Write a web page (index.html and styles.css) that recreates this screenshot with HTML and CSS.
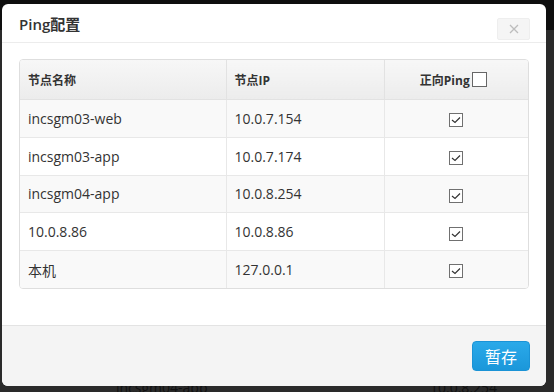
FILE: index.html
```html
<!DOCTYPE html>
<html>
<head>
<meta charset="utf-8">
<link rel="stylesheet" href="styles.css">
</head>
<body>
<div class="backdrop-text"><span class="bt1">incsgm04-app</span><span class="bt2">10.0.8.254</span></div>
<div class="modal">
  <div class="modal-header">
    <h3 class="modal-title">Ping配置</h3>
    <button class="close-btn" type="button">
      <svg width="10" height="10" viewBox="0 0 10 10"><path d="M1 1L9 9M9 1L1 9" stroke="#bdbdbd" stroke-width="1.3" fill="none"/></svg>
    </button>
  </div>
  <div class="modal-body">
    <div class="table-wrap">
      <table class="ping-table">
        <colgroup><col class="c1"><col class="c2"><col class="c3"></colgroup>
        <thead>
          <tr>
            <th>节点名称</th>
            <th>节点IP</th>
            <th class="center"><span class="th-ping">正向Ping<span class="cb cb-empty"></span></span></th>
          </tr>
        </thead>
        <tbody>
          <tr><td>incsgm03-web</td><td>10.0.7.154</td><td class="center"><span class="cb"><svg width="10" height="8" viewBox="0 0 10 8"><path d="M1 4L4 6.5L9 1.5" stroke="#333" stroke-width="1.2" fill="none"/></svg></span></td></tr>
          <tr><td>incsgm03-app</td><td>10.0.7.174</td><td class="center"><span class="cb"><svg width="10" height="8" viewBox="0 0 10 8"><path d="M1 4L4 6.5L9 1.5" stroke="#333" stroke-width="1.2" fill="none"/></svg></span></td></tr>
          <tr><td>incsgm04-app</td><td>10.0.8.254</td><td class="center"><span class="cb"><svg width="10" height="8" viewBox="0 0 10 8"><path d="M1 4L4 6.5L9 1.5" stroke="#333" stroke-width="1.2" fill="none"/></svg></span></td></tr>
          <tr><td>10.0.8.86</td><td>10.0.8.86</td><td class="center"><span class="cb"><svg width="10" height="8" viewBox="0 0 10 8"><path d="M1 4L4 6.5L9 1.5" stroke="#333" stroke-width="1.2" fill="none"/></svg></span></td></tr>
          <tr><td>本机</td><td>127.0.0.1</td><td class="center"><span class="cb"><svg width="10" height="8" viewBox="0 0 10 8"><path d="M1 4L4 6.5L9 1.5" stroke="#333" stroke-width="1.2" fill="none"/></svg></span></td></tr>
        </tbody>
      </table>
    </div>
  </div>
  <div class="modal-footer">
    <button class="btn-primary" type="button">暂存</button>
  </div>
</div>
</body>
</html>
```
FILE: styles.css
```css
html, body {
  margin: 0;
  padding: 0;
}
body {
  width: 554px;
  height: 392px;
  overflow: hidden;
  background: linear-gradient(#0e0e0e 0, #0e0e0e 30px, #2a2a2a 30px, #2a2a2a 100%);
  font-family: "Open Sans", "Noto Sans CJK SC", sans-serif;
  color: #333;
  position: relative;
}
.backdrop-text {
  position: absolute;
  left: 0;
  top: 380px;
  width: 554px;
  font-size: 14px;
  line-height: 16px;
  color: #111;
}
.bt1 { position: absolute; left: 116px; }
.bt2 { position: absolute; left: 430px; }
.modal {
  position: relative;
  margin: 4px 0 0 2px;
  width: 544px;
  height: 382px;
  background: #fff;
  border-radius: 6px;
  overflow: hidden;
  display: flex;
  flex-direction: column;
}
.modal-header {
  height: 38px;
  border-bottom: 1px solid #ececec;
  display: flex;
  align-items: center;
  justify-content: space-between;
  padding: 0 16px 0 17px;
}
.modal-title {
  margin: 0;
  font-size: 15px;
  font-weight: 600;
  color: #333;
  line-height: 20px;
  position: relative;
  top: 1px;
}
.close-btn {
  width: 33px;
  height: 22px;
  margin-top: 11px;
  background: #f5f5f5;
  border: 1px solid #eeeeee;
  border-radius: 2px;
  padding: 0;
  display: flex;
  align-items: center;
  justify-content: center;
}
.modal-body {
  flex: 1;
  padding: 16px 17px 0 17px;
}
.table-wrap {
  border: 1px solid #dedede;
  border-radius: 4px;
  overflow: hidden;
}
.ping-table {
  width: 100%;
  border-collapse: collapse;
  table-layout: fixed;
}
.c1 { width: 206px; }
.c2 { width: 158px; }
.ping-table th {
  height: 39px;
  padding: 0 8px;
  text-align: left;
  font-size: 12px;
  font-weight: 700;
  color: #333;
  background: linear-gradient(#f7f7f7, #ececec);
  border-bottom: 1px solid #e2e2e2;
  border-right: 1px solid #e2e2e2;
}
.ping-table td {
  height: 36.8px;
  padding: 0 8px;
  font-size: 14px;
  color: #333;
  border-top: 1px solid #e8e8e8;
  border-right: 1px solid #e8e8e8;
}
.ping-table th:last-child, .ping-table td:last-child { border-right: none; }
.ping-table tbody tr:first-child td { border-top: none; }
.ping-table tbody tr:nth-child(odd) td { background: #f9f9f9; }
.ping-table .center { text-align: center; }
.th-ping {
  display: inline-flex;
  align-items: center;
  gap: 2px;
  margin-left: -6px;
}
.cb {
  display: inline-flex;
  align-items: center;
  justify-content: center;
  box-sizing: border-box;
  width: 14px;
  height: 14px;
  border: 1px solid #707070;
  background: #fff;
  vertical-align: middle;
}
.cb-empty {
  width: 15px;
  height: 15px;
  border-color: #666;
}
.modal-footer {
  height: 60px;
  border-top: 1px solid #e3e3e3;
  background: #f4f4f4;
  display: flex;
  justify-content: flex-end;
  align-items: flex-start;
  padding: 0 16px;
}
.btn-primary {
  margin-top: 15px;
  width: 58px;
  height: 30px;
  border: 1px solid #1a93d6;
  border-radius: 4px;
  background: linear-gradient(#2aa9e9, #1b97da);
  color: #fff;
  font-family: "Noto Sans CJK SC", sans-serif;
  font-size: 16px;
  padding: 0;
}
```
